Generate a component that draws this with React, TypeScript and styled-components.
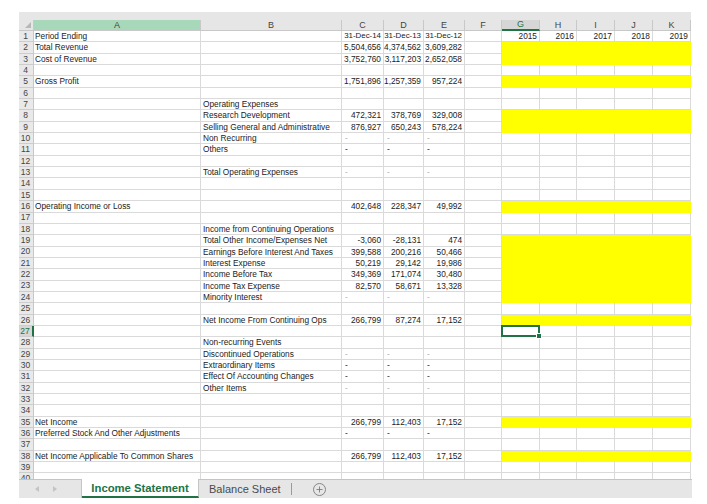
import styled, { createGlobalStyle } from 'styled-components';

const GlobalStyle = createGlobalStyle`
  html, body {
    margin: 0;
    padding: 0;
    background: #ffffff;
  }
  body {
    font-family: 'Liberation Sans', Arial, sans-serif;
  }
`;

type Tone = 'light' | 'dark';

type RowData = {
  a?: string;
  b?: string;
  vals?: string[];
  dash?: Tone;
  yellow?: boolean;
};

const COLS = ['A', 'B', 'C', 'D', 'E', 'F', 'G', 'H', 'I', 'J', 'K'];
const YEARS = ['2015', '2016', '2017', '2018', '2019'];

const ROWS: Record<number, RowData> = {
  1: { a: 'Period Ending', vals: ['31-Dec-14', '31-Dec-13', '31-Dec-12'] },
  2: { a: 'Total Revenue', vals: ['5,504,656', '4,374,562', '3,609,282'], yellow: true },
  3: { a: 'Cost of Revenue', vals: ['3,752,760', '3,117,203', '2,652,058'], yellow: true },
  5: { a: 'Gross Profit', vals: ['1,751,896', '1,257,359', '957,224'], yellow: true },
  7: { b: 'Operating Expenses' },
  8: { b: 'Research Development', vals: ['472,321', '378,769', '329,008'], yellow: true },
  9: { b: 'Selling General and Administrative', vals: ['876,927', '650,243', '578,224'], yellow: true },
  10: { b: 'Non Recurring', dash: 'light' },
  11: { b: 'Others', dash: 'dark' },
  13: { b: 'Total Operating Expenses', dash: 'light' },
  16: { a: 'Operating Income or Loss', vals: ['402,648', '228,347', '49,992'], yellow: true },
  18: { b: 'Income from Continuing Operations' },
  19: { b: 'Total Other Income/Expenses Net', vals: ['-3,060', '-28,131', '474'], yellow: true },
  20: { b: 'Earnings Before Interest And Taxes', vals: ['399,588', '200,216', '50,466'], yellow: true },
  21: { b: 'Interest Expense', vals: ['50,219', '29,142', '19,986'], yellow: true },
  22: { b: 'Income Before Tax', vals: ['349,369', '171,074', '30,480'], yellow: true },
  23: { b: 'Income Tax Expense', vals: ['82,570', '58,671', '13,328'], yellow: true },
  24: { b: 'Minority Interest', dash: 'light', yellow: true },
  26: { b: 'Net Income From Continuing Ops', vals: ['266,799', '87,274', '17,152'], yellow: true },
  28: { b: 'Non-recurring Events' },
  29: { b: 'Discontinued Operations', dash: 'light' },
  30: { b: 'Extraordinary Items', dash: 'dark' },
  31: { b: 'Effect Of Accounting Changes', dash: 'dark' },
  32: { b: 'Other Items', dash: 'light' },
  35: { a: 'Net Income', vals: ['266,799', '112,403', '17,152'], yellow: true },
  36: { a: 'Preferred Stock And Other Adjustments', dash: 'dark' },
  38: { a: 'Net Income Applicable To Common Shares', vals: ['266,799', '112,403', '17,152'], yellow: true },
};

const ROW_COUNT = 40;
const SELECTED = { row: 27, col: 'G' };

function App() {
  const rows = Array.from({ length: ROW_COUNT }, (_, i) => i + 1);

  return (
    <Page>
      <GlobalStyle />
      <Sheet>
        <TopStrip />
        <Corner>
          <svg width="6" height="6" viewBox="0 0 6 6">
            <polygon points="6,0 6,6 0,6" fill="#b8b8b8" />
          </svg>
        </Corner>
        {COLS.map((c) => (
          <ColHead key={c} $state={c === 'A' ? 'green' : c === SELECTED.col ? 'active' : undefined}>
            {c}
          </ColHead>
        ))}

        {rows.map((r) => {
          const row = ROWS[r] || {};
          return [
            <RowHead key={`n${r}`} $active={r === SELECTED.row}>
              {r}
            </RowHead>,
            <Cell key={`a${r}`}>{row.a}</Cell>,
            <Cell key={`b${r}`} $pad={2}>
              {row.b}
            </Cell>,
            ...[0, 1, 2].map((i) =>
              row.vals ? (
                <Cell key={`v${r}${i}`} $align="right" $tight={r === 1}>
                  {row.vals[i]}
                </Cell>
              ) : (
                <Cell key={`v${r}${i}`} $pad={3} $tone={row.dash}>
                  {row.dash ? '-' : ''}
                </Cell>
              )
            ),
            <Cell key={`f${r}`} />,
            ...YEARS.map((y, i) => (
              <Cell
                key={`y${r}${i}`}
                $align="right"
                $fill={row.yellow}
                $selected={r === SELECTED.row && i === 0}
              >
                {r === 1 ? y : ''}
              </Cell>
            )),
          ];
        })}
      </Sheet>

      <TabBar>
        <NavArea>
          <svg width="4" height="6" viewBox="0 0 4 6">
            <polygon points="4,0 4,6 0,3" fill="#c4c4c4" />
          </svg>
          <svg width="4" height="6" viewBox="0 0 4 6">
            <polygon points="0,0 0,6 4,3" fill="#c4c4c4" />
          </svg>
        </NavArea>
        <Tab $active>Income Statement</Tab>
        <Tab>Balance Sheet</Tab>
        <TabDivider />
        <AddSheet>
          <svg width="13" height="13" viewBox="0 0 13 13">
            <circle cx="6.5" cy="6.5" r="6" fill="none" stroke="#7a7a7a" strokeWidth="0.9" />
            <path d="M6.5 3.5v6M3.5 6.5h6" stroke="#7a7a7a" strokeWidth="0.9" />
          </svg>
        </AddSheet>
      </TabBar>
    </Page>
  );
}

const Page = styled.div`
  width: 707px;
  height: 504px;
  padding: 12px 0 0 19px;
  box-sizing: border-box;
  overflow: hidden;
  display: flex;
  flex-direction: column;
`;

const Sheet = styled.div`
  display: grid;
  grid-template-columns: 15px 167px 141px 42px 40px 41px 37px 38px 37px 38px 38px 38px;
  grid-template-rows: 8px 11px;
  grid-auto-rows: 11.35px;
  width: 672px;
  height: 467px;
  overflow: hidden;
  font-size: 8.3px;
  color: #222;
`;

const TopStrip = styled.div`
  grid-column: 1 / -1;
  background: #e6e6e6;
`;

const Corner = styled.div`
  background: #e6e6e6;
  border-right: 1px solid #c8c8c8;
  border-bottom: 1px solid #c8c8c8;
  box-sizing: border-box;
  display: flex;
  align-items: flex-end;
  justify-content: flex-end;
  padding: 0 2px 2px 0;
`;

const ColHead = styled.div<{ $state?: 'green' | 'active' }>`
  background: ${(p) => (p.$state === 'green' ? '#a6d8b9' : p.$state === 'active' ? '#d6d6d6' : '#e6e6e6')};
  border-right: 1px solid #c8c8c8;
  border-bottom: ${(p) => (p.$state === 'active' ? '2px solid #217346' : '1px solid #c8c8c8')};
  box-sizing: border-box;
  display: flex;
  align-items: center;
  justify-content: center;
  font-size: 9px;
  color: ${(p) => (p.$state === 'active' ? '#217346' : '#444')};
  line-height: 1;
`;

const RowHead = styled.div<{ $active?: boolean }>`
  background: ${(p) => (p.$active ? '#d6d6d6' : '#e9e9e9')};
  border-right: ${(p) => (p.$active ? '2px solid #217346' : '1px solid #c8c8c8')};
  border-bottom: 1px solid #cdcdcd;
  box-sizing: border-box;
  display: flex;
  align-items: center;
  justify-content: center;
  padding-right: 1px;
  font-size: 8.5px;
  color: ${(p) => (p.$active ? '#217346' : '#444')};
  line-height: 1;
  overflow: hidden;
`;

const Cell = styled.div<{
  $align?: 'left' | 'right';
  $pad?: number;
  $tone?: Tone;
  $fill?: boolean;
  $selected?: boolean;
  $tight?: boolean;
}>`
  position: relative;
  box-sizing: border-box;
  border-right: 1px solid ${(p) => (p.$fill ? '#ffff00' : '#dadada')};
  border-bottom: 1px solid ${(p) => (p.$fill ? '#ffff00' : '#dadada')};
  background: ${(p) => (p.$fill ? '#ffff00' : '#ffffff')};
  display: flex;
  align-items: center;
  justify-content: ${(p) => (p.$align === 'right' ? 'flex-end' : 'flex-start')};
  padding: ${(p) => (p.$align === 'right' ? '0 2px 0 0' : `0 0 0 ${p.$pad ?? 1}px`)};
  white-space: nowrap;
  line-height: 1;
  font-size: ${(p) => (p.$tight ? '7.9px' : 'inherit')};
  color: ${(p) => (p.$tone === 'light' ? '#b0b0b0' : '#222')};

  ${(p) =>
    p.$selected &&
    `
    &::after {
      content: '';
      position: absolute;
      left: -1px;
      top: -1px;
      right: -1px;
      bottom: -1px;
      border: 2px solid #217346;
    }
    &::before {
      content: '';
      position: absolute;
      right: -3px;
      bottom: -3px;
      width: 4px;
      height: 4px;
      background: #217346;
      border: 1px solid #ffffff;
      z-index: 2;
    }
  `}
`;

const TabBar = styled.div`
  display: flex;
  align-items: stretch;
  width: 673px;
  height: 19px;
  box-sizing: border-box;
  background: #e6e6e6;
  border-top: 1px solid #c4c4c4;
  font-family: 'Liberation Sans', Arial, sans-serif;
`;

const NavArea = styled.div`
  width: 63px;
  box-sizing: border-box;
  display: flex;
  align-items: center;
  gap: 14px;
  padding-left: 16px;
  border-right: 1px solid #c4c4c4;
`;

const Tab = styled.div<{ $active?: boolean }>`
  display: flex;
  align-items: center;
  justify-content: center;
  box-sizing: border-box;
  white-space: nowrap;
  ${(p) =>
    p.$active
      ? `
    width: 117px;
    margin-top: -1px;
    background: #ffffff;
    color: #217346;
    font-weight: 700;
    font-size: 11.3px;
    border-bottom: 2px solid #217346;
    border-right: 1px solid #c4c4c4;
  `
      : `
    padding: 0 10px;
    color: #4a4a4a;
    font-size: 11px;
  `}
`;

const TabDivider = styled.div`
  width: 1px;
  align-self: center;
  height: 12px;
  background: #9a9a9a;
`;

const AddSheet = styled.div`
  display: flex;
  align-items: center;
  margin-left: 21px;
`;

export default App;
